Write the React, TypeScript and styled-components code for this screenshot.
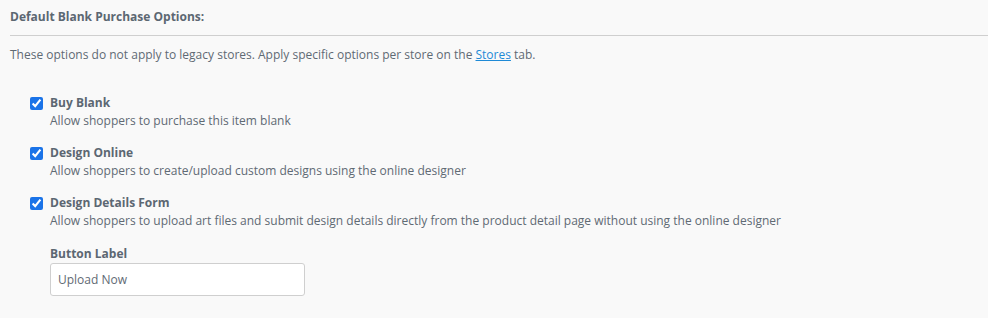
import styled, { createGlobalStyle } from "styled-components";

const GlobalStyle = createGlobalStyle`
  body {
    margin: 0;
    background: #f9f9f9;
    font-family: "Open Sans", "Liberation Sans", sans-serif;
    color: #5f6a74;
  }
`;

type PurchaseOption = {
  id: string;
  title: string;
  description: string;
  checked: boolean;
};

const options: PurchaseOption[] = [
  {
    id: "buy-blank",
    title: "Buy Blank",
    description: "Allow shoppers to purchase this item blank",
    checked: true,
  },
  {
    id: "design-online",
    title: "Design Online",
    description: "Allow shoppers to create/upload custom designs using the online designer",
    checked: true,
  },
  {
    id: "design-details",
    title: "Design Details Form",
    description:
      "Allow shoppers to upload art files and submit design details directly from the product detail page without using the online designer",
    checked: true,
  },
];

const App = () => {
  return (
    <>
      <GlobalStyle />
      <Section>
        <SectionTitle>Default Blank Purchase Options:</SectionTitle>
        <Intro>
          These options do not apply to legacy stores. Apply specific options per store on the{" "}
          <a href="#stores">Stores</a> tab.
        </Intro>
        <OptionList>
          {options.map((option) => (
            <OptionItem key={option.id}>
              <Checkbox type="checkbox" id={option.id} defaultChecked={option.checked} />
              <OptionBody>
                <OptionTitle htmlFor={option.id}>{option.title}</OptionTitle>
                <OptionHint>{option.description}</OptionHint>
                {option.id === "design-details" && (
                  <Field>
                    <FieldLabel htmlFor="button-label">Button Label</FieldLabel>
                    <TextInput id="button-label" defaultValue="Upload Now" />
                  </Field>
                )}
              </OptionBody>
            </OptionItem>
          ))}
        </OptionList>
      </Section>
    </>
  );
};

export default App;

const Section = styled.div`
  padding: 0 0 0 10px;
  font-size: 12px;
  line-height: 18px;
`;

const SectionTitle = styled.h4`
  margin: 0;
  padding: 8px 0 9px;
  font-size: 12px;
  line-height: 18px;
  font-weight: 700;
  color: #5c6772;
  border-bottom: 1px solid #cfcfcf;
`;

const Intro = styled.p`
  margin: 10px 0 0;
  color: #5f6a74;

  a {
    color: #1f8ad6;
    text-decoration: underline;
  }
`;

const OptionList = styled.ul`
  list-style: none;
  margin: 30px 0 0;
  padding: 0 0 0 20px;
  display: flex;
  flex-direction: column;
  gap: 14px;
`;

const OptionItem = styled.li`
  display: flex;
  align-items: flex-start;
  gap: 7px;
`;

const Checkbox = styled.input`
  width: 13px;
  height: 13px;
  margin: 3px 0 0;
  accent-color: #1a73e8;
`;

const OptionBody = styled.div`
  display: flex;
  flex-direction: column;
`;

const OptionTitle = styled.label`
  font-weight: 700;
  color: #5c6772;
`;

const OptionHint = styled.span`
  color: #5f6a74;
`;

const Field = styled.div`
  display: flex;
  flex-direction: column;
  margin-top: 15px;
  gap: 0;
`;

const FieldLabel = styled.label`
  font-weight: 700;
  color: #5c6772;
`;

const TextInput = styled.input`
  box-sizing: border-box;
  width: 255px;
  height: 33px;
  padding: 0 7px;
  border: 1px solid #cfcfcf;
  border-radius: 3px;
  background: #fff;
  font-family: "Open Sans", "Liberation Sans", sans-serif;
  font-size: 12px;
  color: #5f6a74;
  outline: none;
`;
